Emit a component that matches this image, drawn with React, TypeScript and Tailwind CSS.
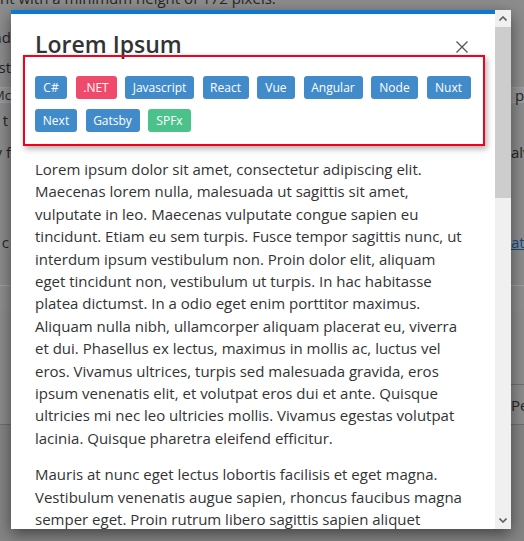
import React from "react";

const badges: { label: string; w: string; c: string }[] = [
  { label: "C#", w: "w-[32px]", c: "bg-[#428bca]" },
  { label: ".NET", w: "w-[41px]", c: "bg-[#ef4a6b]" },
  { label: "Javascript", w: "w-[69px]", c: "bg-[#428bca]" },
  { label: "React", w: "w-[46px]", c: "bg-[#428bca]" },
  { label: "Vue", w: "w-[38px]", c: "bg-[#428bca]" },
  { label: "Angular", w: "w-[59px]", c: "bg-[#428bca]" },
  { label: "Node", w: "w-[47px]", c: "bg-[#428bca]" },
  { label: "Nuxt", w: "w-[44px]", c: "bg-[#428bca]" },
  { label: "Next", w: "w-[42px]", c: "bg-[#428bca]" },
  { label: "Gatsby", w: "w-[54px]", c: "bg-[#428bca]" },
  { label: "SPFx", w: "w-[43px]", c: "bg-[#4cc28b]" },
];

const p1 = [
  "Lorem ipsum dolor sit amet, consectetur adipiscing elit.",
  "Maecenas lorem nulla, malesuada ut sagittis sit amet,",
  "vulputate in leo. Maecenas vulputate congue sapien eu",
  "tincidunt. Etiam eu sem turpis. Fusce tempor sagittis nunc, ut",
  "interdum ipsum vestibulum non. Proin dolor elit, aliquam",
  "eget tincidunt non, vestibulum ut turpis. In hac habitasse",
  "platea dictumst. In a odio eget enim porttitor maximus.",
  "Aliquam nulla nibh, ullamcorper aliquam placerat eu, viverra",
  "et dui. Phasellus ex lectus, maximus in mollis ac, luctus vel",
  "eros. Vivamus ultrices, turpis sed malesuada gravida, eros",
  "ipsum venenatis elit, et volutpat eros dui et ante. Quisque",
  "ultricies mi nec leo ultricies mollis. Vivamus egestas volutpat",
  "lacinia. Quisque pharetra eleifend efficitur.",
];

const p2 = [
  "Mauris at nunc eget lectus lobortis facilisis et eget magna.",
  "Vestibulum venenatis augue sapien, rhoncus faucibus magna",
  "semper eget. Proin rutrum libero sagittis sapien aliquet",
  "vehicula. Nulla facilisi. Sed eu nisl vitae mauris tincidunt.",
];

function BgRow({
  h,
  left,
  right,
  extra,
}: {
  h: string;
  left?: React.ReactNode;
  right?: React.ReactNode;
  extra?: string;
}) {
  return (
    <div className={`flex items-center justify-between ${h} ${extra ?? ""}`}>
      <div className="flex w-[11px] justify-end overflow-hidden whitespace-nowrap">{left}</div>
      <div className="flex w-[13px] justify-start overflow-hidden whitespace-nowrap">{right}</div>
    </div>
  );
}

export default function App() {
  return (
    <div
      className="relative h-[541px] w-[524px] overflow-hidden bg-[#8d8d8d] text-[#262626]"
      style={{ fontFamily: '"Open Sans", "Noto Sans", sans-serif' }}
    >
      {/* page behind the overlay */}
      <div className="flex flex-col text-[15px] leading-[20px]">
        <div className="-mt-[12px] h-[20px] whitespace-nowrap pl-0">ht with a minimum height of 172 pixels.</div>
        <BgRow h="h-[37px]" left={<span>nd</span>} extra="mt-[10px]" />
        <BgRow h="h-[24px]" left={<span>st</span>} />
        <BgRow
          h="h-[16px]"
          extra="mt-[8px] border-y border-[#a0a0a0] bg-[#999999]"
          left={<span className="text-[13px]">Mc</span>}
          right={<span className="pl-[4px]">p</span>}
        />
        <BgRow h="h-[28px]" extra="mt-[3px]" left={<span className="pr-[3px]">t</span>} />
        <BgRow
          h="h-[36px]"
          left={<span>y f</span>}
          right={<span>alv</span>}
        />
        <BgRow
          h="h-[84px]"
          extra="items-end pb-[2px]"
          left={<span className="pr-[2px]">c</span>}
          right={<span className="text-[#0d4d88] underline">at</span>}
        />
        <div className="mt-[31px] h-[26px] border-t border-[#a2a2a2] bg-[#8f8f8f]" />
        <div className="flex h-[114px] flex-col">
          <div className="flex h-[74px] justify-end">
            <div className="w-[13px] border-b border-[#707070]" />
          </div>
          <div className="flex h-[40px] items-center justify-end border-b border-[#6f6f6f]">
            <span className="w-[13px] overflow-hidden whitespace-nowrap">Pe</span>
          </div>
        </div>
        <div className="h-[120px] bg-[#858585]" />
      </div>

      {/* modal */}
      <div className="absolute left-[11px] top-[10px] flex h-[519px] w-[500px] bg-white shadow-[0_5px_15px_rgba(0,0,0,0.5)]">
        <div className="flex w-[484px] flex-col overflow-hidden border-t-4 border-[#0b78d2]">
          <div className="flex h-[41px] justify-between pl-[24px] pr-[27px]">
            <div className="pt-[16px] text-[23px] font-semibold leading-[28px] text-[#333333]">Lorem Ipsum</div>
            <div className="pt-[27px]">
              <svg width="12" height="12" viewBox="0 0 12 12">
                <path d="M0.5 0.5 L11.5 11.5 M11.5 0.5 L0.5 11.5" stroke="#555555" strokeWidth="1.3" fill="none" />
              </svg>
            </div>
          </div>
          <div className="ml-[12px] mr-[10px] border-2 border-[#f4001e] pb-[12px] pl-[10px] pr-[8px] pt-[19px] shadow-[2px_3px_6px_rgba(0,0,0,0.3)]">
            <div className="flex flex-wrap gap-x-[8.5px] gap-y-[10px]">
              {badges.map((b) => (
                <div
                  key={b.label}
                  className={`${b.w} ${b.c} flex h-[23px] items-center justify-center rounded-[3px] text-[12px] leading-none text-white`}
                >
                  {b.label}
                </div>
              ))}
            </div>
          </div>
          <div className="mt-[12px] pl-[24px] text-[15px] leading-[22.4px] text-[#333333]">
            <p className="mb-[14px]">
              {p1.map((l) => (
                <span key={l} className="block whitespace-nowrap">
                  {l}
                </span>
              ))}
            </p>
            <p>
              {p2.map((l) => (
                <span key={l} className="block whitespace-nowrap">
                  {l}
                </span>
              ))}
            </p>
          </div>
        </div>
        {/* scrollbar */}
        <div className="flex w-[16px] flex-col bg-[#f0f0f0]">
          <div className="flex h-[17px] items-center justify-center">
            <svg width="8" height="5" viewBox="0 0 8 5">
              <path d="M0.5 4.5 L4 1 L7.5 4.5" stroke="#606060" strokeWidth="1.6" fill="none" />
            </svg>
          </div>
          <div className="h-[171px] bg-[#cdcdcd]" />
          <div className="flex-1" />
          <div className="flex h-[17px] items-center justify-center">
            <svg width="8" height="5" viewBox="0 0 8 5">
              <path d="M0.5 0.5 L4 4 L7.5 0.5" stroke="#606060" strokeWidth="1.6" fill="none" />
            </svg>
          </div>
        </div>
      </div>
    </div>
  );
}
